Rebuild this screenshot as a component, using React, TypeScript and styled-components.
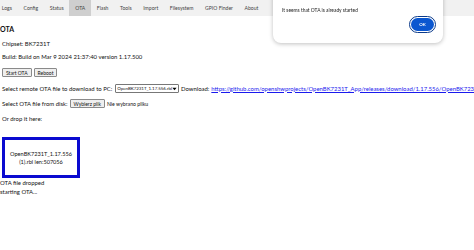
import React from "react"
import styled, { createGlobalStyle } from "styled-components"

const tabs = [
  "Logs",
  "Config",
  "Status",
  "OTA",
  "Flash",
  "Tools",
  "Import",
  "Filesystem",
  "GPIO Finder",
  "About",
]

export default function App() {
  return (
    <>
      <GlobalStyle />
      <TabBar>
        {tabs.map(t => (
          <Tab key={t} $active={t === "OTA"}>
            {t}
          </Tab>
        ))}
      </TabBar>
      <Content>
        <Heading>OTA</Heading>
        <Row $top={7}>Chipset: BK7231T</Row>
        <Row $top={5}>Build: Build on Mar 9 2024 21:37:40 version 1.17.500</Row>
        <Row $top={7}>
          <Button>Start OTA</Button>
          <Button>Reboot</Button>
        </Row>
        <Row $top={7}>
          Select remote OTA file to download to PC:
          <Select>
            <SelectValue>OpenBK7231T_1.17.556.rbl</SelectValue>
            <Arrow viewBox="0 0 6 4">
              <path d="M0.5 0.5 L3 3.5 L5.5 0.5 Z" fill="#000" />
            </Arrow>
          </Select>
          Download:
          <Link href="#">
            https://github.com/openshwprojects/OpenBK7231T_App/releases/download/1.17.556/OpenBK7231T_1.17.556.rbl
          </Link>
        </Row>
        <Row $top={6}>
          Select OTA file from disk:
          <Button>Wybierz plik</Button>
          <Small>Nie wybrano pliku</Small>
        </Row>
        <Row $top={7}>Or drop it here:</Row>
        <DropZone>
          <div>OpenBK7231T_1.17.556</div>
          <div>(1).rbl len:507056</div>
        </DropZone>
        <Log>
          <div>OTA file dropped</div>
          <div>starting OTA...</div>
        </Log>
      </Content>
      <Dialog>
        <DialogText>It seems that OTA is already started</DialogText>
        <DialogFooter>
          <OkButton>OK</OkButton>
        </DialogFooter>
      </Dialog>
    </>
  )
}

// --- styled components ---

const GlobalStyle = createGlobalStyle`
  body {
    margin: 0;
    background: #fff;
    color: #111;
    font-family: Lato, "Liberation Sans", sans-serif;
    font-size: 5.95px;
    overflow: hidden;
    width: 474px;
    height: 250px;
  }
`

const TabBar = styled.div`
  display: flex;
  height: 16px;
  margin-left: -4px;
  background: #f1f1f1;
`

const Tab = styled.div<{ $active?: boolean }>`
  padding: 0 5.8px;
  line-height: 16px;
  font-size: 5.1px;
  color: #444;
  background: ${p => (p.$active ? "#cfcfcf" : "transparent")};
`

const Content = styled.div`
  padding-left: 2px;
`

const Heading = styled.div`
  margin: 9px 0 0 -2px;
  font-size: 7px;
  font-weight: 700;
  line-height: 8px;
`

const Row = styled.div<{ $top: number }>`
  display: flex;
  align-items: center;
  gap: 2px;
  margin-top: ${p => p.$top}px;
  min-height: 8px;
  line-height: 8px;
  white-space: nowrap;
`

const Button = styled.span`
  display: inline-flex;
  align-items: center;
  height: 9px;
  padding: 0 3px;
  font-size: 5px;
  border: 1px solid #8a8a8a;
  border-radius: 1px;
  background: #efefef;
  box-sizing: border-box;
`

const Select = styled.span`
  display: inline-flex;
  align-items: center;
  justify-content: space-between;
  width: 68px;
  height: 9px;
  margin-left: 1px;
  padding: 0 1px 0 1px;
  box-sizing: border-box;
  border: 1px solid #777;
  border-radius: 1px;
  font-size: 4.5px;
`

const SelectValue = styled.span`
  letter-spacing: -0.05px;
`

const Arrow = styled.svg`
  flex: none;
  width: 5px;
  height: 4px;
`

const Link = styled.a`
  color: #1a1aee;
  text-decoration: underline;
`

const Small = styled.span`
  font-size: 5.2px;
`

const DropZone = styled.div`
  display: flex;
  flex-direction: column;
  align-items: center;
  justify-content: center;
  width: 78px;
  height: 41px;
  margin-top: 14px;
  box-sizing: border-box;
  border: 3px solid #0a0ad0;
  font-size: 5.6px;
  line-height: 8px;
`

const Log = styled.div`
  margin-left: -2px;
  line-height: 9px;
`

const Dialog = styled.div`
  position: fixed;
  top: -20px;
  left: 273px;
  width: 170px;
  height: 63px;
  background: #fff;
  border-radius: 8px;
  box-shadow: 0 1px 4px rgba(0, 0, 0, 0.25);
  padding: 28px 9px 0;
  box-sizing: border-box;
`

const DialogText = styled.div`
  font-size: 4.9px;
  line-height: 5px;
  color: #222;
`

const DialogFooter = styled.div`
  display: flex;
  justify-content: flex-end;
  margin-top: 5px;
`

const OkButton = styled.span`
  display: flex;
  align-items: center;
  justify-content: center;
  width: 23px;
  height: 13px;
  border-radius: 8px;
  background: #0b57d0;
  color: #fff;
  font-size: 4.4px;
  font-weight: 700;
  outline: 1px solid #0b3a8a;
  outline-offset: 1px;
`
